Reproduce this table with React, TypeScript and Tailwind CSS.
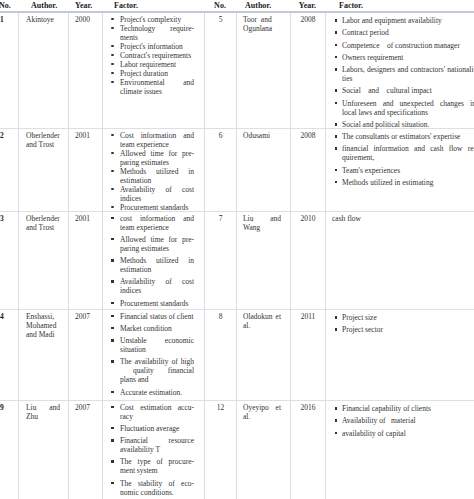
import React from 'react';

type Item = string[];

interface Row {
  no: string;
  author: string[];
  year: string;
  factors: Item[] | string;
  round?: boolean;
  compact?: boolean;
}

interface Pair {
  left: Row;
  right: Row;
  height: string;
}

const COLS = 'grid grid-cols-[22px_50px_34px_102px_32px_54px_35px_160px]';

const pairs: Pair[] = [
  {
    height: 'h-[116px]',
    left: {
      no: '1',
      author: ['Akintoye'],
      year: '2000',
      round: true,
      compact: true,
      factors: [
        ["Project's complexity"],
        ['Technology require-', 'ments'],
        ["Project's information"],
        ["Contract's requirements"],
        ['Labor requirement'],
        ['Project duration'],
        ['Environmental and', 'climate issues'],
      ],
    },
    right: {
      no: '5',
      author: ['Toor  and', 'Ogunlana'],
      year: '2008',
      factors: [
        ['Labor and equipment availability'],
        ['Contract period'],
        ['Competence    of construction manager'],
        ['Owners requirement'],
        ["Labors, designers and contractors' nationali-", 'ties'],
        ['Social    and    cultural impact'],
        ['Unforeseen and unexpected changes in', 'local laws and specifications'],
        ['Social and political situation.'],
      ],
    },
  },
  {
    height: 'h-[83px]',
    left: {
      no: '2',
      author: ['Oberlender', 'and Trost'],
      year: '2001',
      round: true,
      compact: true,
      factors: [
        ['Cost information and', 'team experience'],
        ['Allowed time for pre-', 'paring estimates'],
        ['Methods utilized in', 'estimation'],
        ['Availability of cost', 'indices'],
        ['Procurement standards'],
      ],
    },
    right: {
      no: '6',
      author: ['Odusami'],
      year: '2008',
      factors: [
        ["The consultants or estimators' expertise"],
        ['financial information and cash flow re-', 'quirement,'],
        ["Team's experiences"],
        ['Methods utilized in estimating'],
      ],
    },
  },
  {
    height: 'h-[98px]',
    left: {
      no: '3',
      author: ['Oberlender', 'and Trost'],
      year: '2001',
      factors: [
        ['cost information and', 'team experience'],
        ['Allowed time for pre-', 'paring estimates'],
        ['Methods utilized in', 'estimation'],
        ['Availability of cost', 'indices'],
        ['Procurement standards'],
      ],
    },
    right: {
      no: '7',
      author: ['Liu and', 'Wang'],
      year: '2010',
      factors: 'cash flow',
    },
  },
  {
    height: 'h-[91px]',
    left: {
      no: '4',
      author: ['Enshassi,', 'Mohamed', 'and Madi'],
      year: '2007',
      factors: [
        ['Financial status of client'],
        ['Market condition'],
        ['Unstable economic', 'situation'],
        ['The availability of high', '\tquality financial', 'plans and'],
        ['Accurate estimation.'],
      ],
    },
    right: {
      no: '8',
      author: ['Oladokun et', 'al.'],
      year: '2011',
      factors: [['Project size'], ['Project sector']],
    },
  },
  {
    height: 'h-[110px]',
    left: {
      no: '9',
      author: ['Liu and', 'Zhu'],
      year: '2007',
      factors: [
        ['Cost estimation accu-', 'racy'],
        ['Fluctuation average'],
        ['Financial resource', 'availability T'],
        ['The type of procure-', 'ment system'],
        ['The stability of eco-', 'nomic conditions.'],
      ],
    },
    right: {
      no: '12',
      author: ['Oyeyipo et', 'al.'],
      year: '2016',
      factors: [
        ['Financial capability of clients'],
        ['Availability of   material'],
        ['availability of capital'],
      ],
    },
  },
];

// double spaces keep their width, other non-final lines are justified
function Lines({ lines }: { lines: string[] }) {
  return (
    <>
      {lines.map((raw, i) => {
        const indent = raw.startsWith('\t');
        const text = raw.replace('\t', '');
        const last = i === lines.length - 1;
        if (text.includes('  ')) {
          return (
            <div key={i} className="whitespace-pre">
              {text}
            </div>
          );
        }
        return (
          <div
            key={i}
            className={
              (last ? '' : 'text-justify [text-align-last:justify] ') +
              (indent ? 'pl-[13px]' : '')
            }
          >
            {text}
          </div>
        );
      })}
    </>
  );
}

function Factors({ row, side }: { row: Row; side: 'left' | 'right' }) {
  if (typeof row.factors === 'string') {
    return <div className="pl-[6px] pt-[1.5px]">{row.factors}</div>;
  }
  const pad =
    side === 'left' ? 'pl-[8px] pr-[10px] pt-[1.5px]' : 'pl-[8.5px] pr-[9px] pt-[3px]';
  return (
    <div className={`flex flex-col ${row.compact ? '' : 'gap-[3.3px]'} ${pad}`}>
      {row.factors.map((item, i) => (
        <div key={i} className="flex">
          <span className={`${side === 'left' ? 'w-[9px]' : 'w-[7.5px]'} shrink-0 pt-[3px]`}>
            <span
              className={`block w-[2.5px] h-[2.5px] bg-[#333] ${row.round ? 'rounded-full' : ''}`}
            />
          </span>
          <div className="flex-1 min-w-0">
            <Lines lines={item} />
          </div>
        </div>
      ))}
    </div>
  );
}

const cell = 'border-l border-[#d9dce2]';

export default function App() {
  return (
    <div className="w-[474px] h-[499px] overflow-hidden bg-white">
      <div className="-ml-[4px] w-[489px] font-['Liberation_Serif','Times_New_Roman',serif] text-[7.5px] leading-[9px] text-[#333]">
        <div
          className={`${COLS} h-[13px] border-b-2 border-[#c2c9d6] font-bold text-[8px] leading-[10px] text-[#1c1c1c]`}
        >
          <div className="pl-[3px] pt-[1px]">No.</div>
          <div className="pl-[13px] pt-[1px]">Author.</div>
          <div className="pl-[7px] pt-[1px]">Year.</div>
          <div className="pl-[12px] pt-[1px]">Factor.</div>
          <div className="text-center pt-[1px]">No.</div>
          <div className="pl-[9px] pt-[1px]">Author.</div>
          <div className="text-center pt-[1px]">Year.</div>
          <div className="pl-[14px] pt-[1px]">Factor.</div>
        </div>

        {pairs.map((p, i) => (
          <div key={i} className={`${COLS} ${p.height} border-b border-[#dcdfe5]`}>
            <div className="pl-[4px] pt-[1.5px] font-bold text-[#1c1c1c]">{p.left.no}</div>
            <div className={`${cell} pl-[7px] pr-[8px] pt-[1.5px]`}>
              <Lines lines={p.left.author} />
            </div>
            <div className={`${cell} pl-[6px] pt-[1.5px]`}>{p.left.year}</div>
            <div className={cell}>
              <Factors row={p.left} side="left" />
            </div>
            <div className={`${cell} text-center pt-[1.5px]`}>{p.right.no}</div>
            <div className={`${cell} pl-[6px] pr-[9px] pt-[1.5px]`}>
              <Lines lines={p.right.author} />
            </div>
            <div className={`${cell} text-center pt-[1.5px]`}>{p.right.year}</div>
            <div className={cell}>
              <Factors row={p.right} side="right" />
            </div>
          </div>
        ))}
      </div>
    </div>
  );
}
